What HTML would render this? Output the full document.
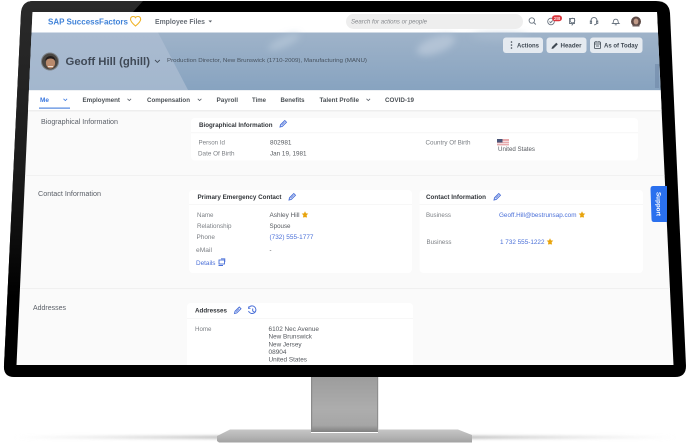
<!DOCTYPE html>
<html><head><meta charset="utf-8"><title>SAP SuccessFactors</title>
<style>
html,body{margin:0;padding:0;background:#fff;width:686px;height:443px;overflow:hidden}
svg{display:block}
text{font-family:"Liberation Sans",sans-serif;font-size:6px;fill:#6a6d70}
.b{font-weight:700}
.k{fill:#7b7f84}
.v{fill:#55595e}
.l{fill:#4a6fd8}
.h{fill:#32363a;font-weight:700}
.n{fill:#4c5156;font-weight:700;font-size:6px}
.s{fill:#5b6068;font-size:7px}
</style></head><body>
<svg width="686" height="443" viewBox="0 0 686 443" xmlns="http://www.w3.org/2000/svg">
<defs>
<linearGradient id="neck" x1="0" x2="0" y1="0" y2="1"><stop offset="0" stop-color="#9c9c9c"/><stop offset=".6" stop-color="#adadad"/><stop offset=".88" stop-color="#a6a6a6"/><stop offset="1" stop-color="#7f7f7f"/></linearGradient>
<linearGradient id="base" x1="0" x2="0" y1="0" y2="1"><stop offset="0" stop-color="#c6c6c6"/><stop offset=".6" stop-color="#b2b2b2"/><stop offset="1" stop-color="#a2a2a2"/></linearGradient>
<linearGradient id="ban" x1="0" x2="0" y1="0" y2="1"><stop offset="0" stop-color="#9fb3c9"/><stop offset="1" stop-color="#87a3c0"/></linearGradient>
<linearGradient id="lf" x1="0" x2="0" y1="0" y2="1"><stop offset="0" stop-color="#aabbd0"/><stop offset="1" stop-color="#a3b7ce"/></linearGradient>
<linearGradient id="bez" x1="0" x2="0" y1="0" y2="1"><stop offset="0" stop-color="#2a2a2a"/><stop offset=".45" stop-color="#1c1c1c"/><stop offset=".8" stop-color="#000"/></linearGradient>
<linearGradient id="shL" x1="0" x2="1" y1="0" y2="0"><stop offset="0" stop-color="#ddd" stop-opacity="0"/><stop offset="1" stop-color="#c4c4c4"/></linearGradient>
<linearGradient id="shR" x1="0" x2="1" y1="0" y2="0"><stop offset="0" stop-color="#c4c4c4"/><stop offset="1" stop-color="#ddd" stop-opacity="0"/></linearGradient>
<filter id="sf" x="-20%" y="-200%" width="140%" height="500%"><feGaussianBlur stdDeviation="1.2"/></filter>
<filter id="cl" x="-50%" y="-100%" width="200%" height="300%"><feGaussianBlur stdDeviation="3.500"/></filter>
<filter id="t" x="-2%" y="-2%" width="104%" height="104%"><feGaussianBlur stdDeviation="0.3"/></filter>
<clipPath id="scr"><polygon points="32.500,12 657,12 673.500,365 16.500,365"/></clipPath>
<symbol id="pen" viewBox="0 0 10 10"><path d="M1.200 8.800l.6-2.600 5-5 2 2-5 5z" fill="none" stroke="#4a6fd8" stroke-width="1.100"/><path d="M3 6.800l3.600-3.600" stroke="#4a6fd8" stroke-width=".7"/></symbol>
<symbol id="star" viewBox="0 0 10 10"><path d="M5 .4l1.450 3 3.250.4-2.400 2.250.65 3.250L5 8.700 2.050 9.300l.65-3.250L.3 3.800l3.250-.4z" fill="#e8a40c"/></symbol>
</defs>

<!-- shadows -->
<rect x="14" y="435.500" width="206" height="3.500" fill="url(#shL)" filter="url(#sf)"/>
<rect x="470" y="435.500" width="206" height="3.500" fill="url(#shR)" filter="url(#sf)"/>

<!-- stand -->
<rect x="311" y="376" width="67" height="56" fill="url(#neck)"/>
<rect x="311" y="376" width="1.200" height="55" fill="#8a8a8a"/>
<rect x="377" y="376" width="1.200" height="55" fill="#8e8e8e"/>
<polygon points="230,429.500 311,429.500 311,433 378,433 378,429.500 458,429.500 472,435 472,442.500 219,442.500 217,441 217,436" fill="url(#base)"/>

<!-- frame -->
<path d="M33 1H656Q669 1 670 13L686 366Q686 377 675 377H14Q3.500 377 4 366L21 13Q22 1 33 1Z" fill="#000"/>
<path d="M33 1H143L133 12H32.500L16.500 365L8 372Q3.500 372 4 366L21 13Q22 1 33 1Z" fill="url(#bez)"/>

<!-- screen -->
<g clip-path="url(#scr)">
<rect x="0" y="12" width="686" height="354" fill="#fafafa"/>
<rect x="0" y="12" width="686" height="20.500" fill="#fff"/>
<rect x="0" y="32.500" width="686" height="57.500" fill="url(#ban)"/>
<polygon points="0,32.500 158,32.500 188,90 0,90" fill="url(#lf)"/>
<g filter="url(#cl)">
<ellipse cx="284" cy="42" rx="17" ry="5" transform="rotate(-25 284 42)" fill="#b7c7d8" opacity=".7"/>
<ellipse cx="436" cy="45" rx="20" ry="8" transform="rotate(-20 436 45)" fill="#b9c8d9" opacity=".8"/>
<ellipse cx="500" cy="36" rx="28" ry="4" fill="#aebfd2" opacity=".5"/>
</g>
<rect x="0" y="90" width="686" height="1" fill="#eef1f4"/>
<rect x="0" y="91" width="686" height="19" fill="#fff"/>
<rect x="0" y="110" width="686" height="1.500" fill="#eeeeee"/>
<rect x="655" y="64" width="4" height="24" fill="#6f89a8" opacity=".6"/>
<rect x="0" y="175" width="686" height=".8" fill="#efefef"/>
<rect x="0" y="288" width="686" height="1" fill="#f0f0f0"/>
<rect x="39" y="107.600" width="31" height="1" fill="#2f6fd8"/>

<!-- cards -->
<rect x="191" y="118" width="447" height="42.500" rx="4" fill="#fff"/>
<rect x="191" y="132" width="447" height="1.300" fill="#f8f8f8"/>
<rect x="189" y="190" width="223" height="83" rx="4" fill="#fff"/>
<rect x="189" y="204" width="223" height="1" fill="#f7f7f7"/>
<rect x="419.500" y="190" width="223.500" height="83" rx="4" fill="#fff"/>
<rect x="419.500" y="204" width="223.500" height="1" fill="#f7f7f7"/>
<rect x="187" y="303" width="226" height="70" rx="4" fill="#fff"/>
<rect x="187" y="318" width="226" height="1" fill="#f7f7f7"/>

<!-- search -->
<rect x="346" y="14" width="177" height="15" rx="7.500" fill="#eeeeee"/>
</g>

<g filter="url(#t)">
<!-- top bar -->
<text x="48" y="24.500" class="b" style="font-size:8px;fill:#3f82d8" textLength="80" lengthAdjust="spacingAndGlyphs">SAP SuccessFactors</text>
<path d="M135.500 26C132 23 130.500 21 130.500 19.200C130.500 17.300 132 16.400 133.400 16.500C134.500 16.500 135.200 17 135.500 17.600C135.900 17 136.600 16.500 137.700 16.500C139.200 16.400 140.700 17.300 140.700 19.200C140.700 21 139.100 23 135.500 26Z" fill="none" stroke="#f0b429" stroke-width="1.100"/>
<text x="155" y="24" class="b" style="font-size:7px;fill:#6a7078" textLength="50" lengthAdjust="spacingAndGlyphs">Employee Files</text>
<path d="M208.500 20.500h3.600l-1.800 2z" fill="#5a6068"/>
<text x="351" y="23.500" style="font-size:6px;font-style:italic;fill:#85888c" textLength="76" lengthAdjust="spacingAndGlyphs">Search for actions or people</text>
<!-- header icons -->
<g fill="none" stroke="#6a7480" stroke-width=".9">
<circle cx="531.800" cy="20.500" r="2.700"/><path d="M533.800 22.500l2 2"/>
<circle cx="551" cy="21.500" r="3.300"/><path d="M549.500 21.500l1.200 1.200 2-2.300"/>
<path d="M569.500 18.500h5v5h-1.300l-1 1.300v-1.300h-2.700z"/><circle cx="572.500" cy="20.500" r="2.300"/>
<path d="M591 22v-1.500a3 3 0 0 1 6 0V22"/><rect x="590.300" y="21" width="1.300" height="2.500"/><rect x="596.500" y="21" width="1.300" height="2.500"/><path d="M596.500 23.800q-1 1.200-2.500 1"/>
<path d="M612.500 23.500q1-.8 1-2.500a2.300 2.300 0 0 1 4.500 0q0 1.700 1 2.500z"/><path d="M614.800 24.800h2"/>
</g>
<rect x="552" y="15.200" width="10" height="6" rx="3" fill="#d9363e"/>
<text x="553.800" y="20" style="font-size:4.500px;fill:#fbd8da" class="b" textLength="6.500" lengthAdjust="spacingAndGlyphs">28</text>
<circle cx="636" cy="21.500" r="5" fill="#5d4a44"/>
<ellipse cx="636" cy="21.500" rx="2.400" ry="3" fill="#c09a88"/>
<path d="M632.500 25q3.500-1.500 7 0v1.500h-7z" fill="#6a5a58"/>

<!-- banner buttons -->
<rect x="503" y="37.500" width="40" height="15.500" rx="3" fill="#e5eaf0"/>
<rect x="546.500" y="37.500" width="40" height="15.500" rx="3" fill="#e5eaf0"/>
<rect x="590" y="37.500" width="52.500" height="15.500" rx="3" fill="#e5eaf0"/>
<g fill="#3f4852"><circle cx="511.500" cy="42" r=".8"/><circle cx="511.500" cy="45" r=".8"/><circle cx="511.500" cy="48" r=".8"/></g>
<path d="M551.500 49l.5-2 4.300-4.300 1.500 1.500-4.300 4.300z" fill="#3f4852"/>
<g fill="none" stroke="#3f4852" stroke-width=".8"><rect x="594.500" y="42" width="6" height="6.500" rx=".6"/><path d="M594.500 44h6M596 41v1.500M599 41v1.500M596 46h3"/></g>
<text x="517" y="47.300" class="b" style="font-size:6px;fill:#3f4852" textLength="22" lengthAdjust="spacingAndGlyphs">Actions</text>
<text x="560.500" y="47.300" class="b" style="font-size:6px;fill:#3f4852" textLength="21" lengthAdjust="spacingAndGlyphs">Header</text>
<text x="604" y="47.300" class="b" style="font-size:6px;fill:#3f4852" textLength="34" lengthAdjust="spacingAndGlyphs">As of Today</text>

<!-- profile -->
<circle cx="50" cy="61.500" r="9" fill="#7b8084"/>
<circle cx="50" cy="61.500" r="8" fill="#4a4541"/>
<ellipse cx="50.500" cy="63" rx="4.600" ry="5.500" fill="#b98a6c"/>
<path d="M45 61q1-5 5.500-5t5 5q-2-2.500-5-2.500t-5.500 2.500z" fill="#241f1c"/>
<path d="M48 66h5v.9h-5z" fill="#efe5dd"/>
<text x="65.500" y="65" class="b" style="font-size:11px;fill:#3f4956" textLength="84.500" lengthAdjust="spacingAndGlyphs">Geoff Hill (ghill)</text>
<path d="M155 60l2.400 2.400 2.400-2.400" fill="none" stroke="#414b58" stroke-width=".9"/>
<text x="167" y="62" style="font-size:5.500px;fill:#47525f" textLength="200" lengthAdjust="spacingAndGlyphs">Production Director, New Brunswick (1710-2009), Manufacturing (MANU)</text>

<!-- nav -->
<text x="40" y="102" class="n" style="fill:#3b78e0" textLength="9" lengthAdjust="spacingAndGlyphs">Me</text>
<text x="82.500" y="102" class="n" textLength="37.500" lengthAdjust="spacingAndGlyphs">Employment</text>
<text x="147" y="102" class="n" textLength="43" lengthAdjust="spacingAndGlyphs">Compensation</text>
<text x="216.500" y="102" class="n" textLength="21.500" lengthAdjust="spacingAndGlyphs">Payroll</text>
<text x="252" y="102" class="n" textLength="14" lengthAdjust="spacingAndGlyphs">Time</text>
<text x="280.500" y="102" class="n" textLength="24" lengthAdjust="spacingAndGlyphs">Benefits</text>
<text x="319.500" y="102" class="n" textLength="39.500" lengthAdjust="spacingAndGlyphs">Talent Profile</text>
<text x="385" y="102" class="n" textLength="29" lengthAdjust="spacingAndGlyphs">COVID-19</text>
<g fill="none" stroke-width=".8">
<path d="M63.500 98.800l1.800 1.800 1.800-1.800" stroke="#3b78e0"/>
<path d="M127.500 98.800l1.800 1.800 1.800-1.800" stroke="#5a6068"/>
<path d="M197.800 98.800l1.800 1.800 1.800-1.800" stroke="#5a6068"/>
<path d="M366.500 98.800l1.800 1.800 1.800-1.800" stroke="#5a6068"/>
</g>

<!-- biographical -->
<text x="41" y="124" class="s" textLength="77" lengthAdjust="spacingAndGlyphs">Biographical Information</text>
<text x="199" y="127" class="h" textLength="73.500" lengthAdjust="spacingAndGlyphs">Biographical Information</text>
<use href="#pen" x="279" y="119.500" width="8.500" height="8.500"/>
<text x="198.500" y="144.500" class="k" textLength="26.500" lengthAdjust="spacingAndGlyphs">Person Id</text>
<text x="270" y="144.500" class="v" textLength="21.500" lengthAdjust="spacingAndGlyphs">802981</text>
<text x="198" y="155.500" class="k" textLength="36.500" lengthAdjust="spacingAndGlyphs">Date Of Birth</text>
<text x="270" y="155.500" class="v" textLength="36.500" lengthAdjust="spacingAndGlyphs">Jan 19, 1981</text>
<text x="425.500" y="144.500" class="k" textLength="45" lengthAdjust="spacingAndGlyphs">Country Of Birth</text>
<rect x="497" y="139" width="12" height="7" fill="#e8a9ac"/>
<rect x="497" y="141" width="12" height=".9" fill="#f4e3e3"/><rect x="497" y="143" width="12" height=".9" fill="#f4e3e3"/><rect x="497" y="145" width="12" height=".9" fill="#f4e3e3"/>
<rect x="497" y="139" width="5.500" height="3.500" fill="#4b5578"/>
<text x="498" y="151" class="v" textLength="37" lengthAdjust="spacingAndGlyphs">United States</text>

<!-- contact -->
<text x="38" y="196" class="s" textLength="63" lengthAdjust="spacingAndGlyphs">Contact Information</text>
<text x="197.500" y="199" class="h" textLength="84" lengthAdjust="spacingAndGlyphs">Primary Emergency Contact</text>
<use href="#pen" x="288" y="192.500" width="8.500" height="8.500"/>
<text x="197" y="216.800" class="k" textLength="16.500" lengthAdjust="spacingAndGlyphs">Name</text>
<text x="269.500" y="216.800" class="v" textLength="30" lengthAdjust="spacingAndGlyphs">Ashley Hill</text>
<use href="#star" x="301.500" y="211" width="7" height="7"/>
<text x="197" y="228" class="k" textLength="34.500" lengthAdjust="spacingAndGlyphs">Relationship</text>
<text x="269.500" y="228" class="v" textLength="21" lengthAdjust="spacingAndGlyphs">Spouse</text>
<text x="196.500" y="239" class="k" textLength="18.500" lengthAdjust="spacingAndGlyphs">Phone</text>
<text x="269.500" y="239" class="l" textLength="44" lengthAdjust="spacingAndGlyphs">(732) 555-1777</text>
<text x="196" y="252" class="k" textLength="16" lengthAdjust="spacingAndGlyphs">eMail</text>
<text x="269.500" y="252" class="v">-</text>
<text x="196" y="264.800" class="l" textLength="19.500" lengthAdjust="spacingAndGlyphs">Details</text>
<g fill="none" stroke="#4a6fd8" stroke-width=".9"><rect x="219" y="260" width="5.500" height="4"/><path d="M221 258.800h3.800v3.200M218.500 265.500h4.500"/></g>

<text x="426" y="199" class="h" textLength="60" lengthAdjust="spacingAndGlyphs">Contact Information</text>
<use href="#pen" x="493" y="192.500" width="8.500" height="8.500"/>
<text x="426" y="216.800" class="k" textLength="25" lengthAdjust="spacingAndGlyphs">Business</text>
<text x="499" y="216.800" class="l" textLength="77.500" lengthAdjust="spacingAndGlyphs">Geoff.Hill@bestrunsap.com</text>
<use href="#star" x="578.500" y="211" width="7" height="7"/>
<text x="426.500" y="243.800" class="k" textLength="25" lengthAdjust="spacingAndGlyphs">Business</text>
<text x="500" y="243.800" class="l" textLength="44.500" lengthAdjust="spacingAndGlyphs">1 732 555-1222</text>
<use href="#star" x="546.500" y="238" width="7" height="7"/>

<!-- support -->
<path d="M667 186H653Q650.500 186 650.500 189L651.500 219Q651.500 222 654 222H667Z" fill="#2b70ee"/>
<text transform="translate(656.500,192) rotate(90)" class="b" style="font-size:6px;fill:#fff" textLength="24" lengthAdjust="spacingAndGlyphs">Support</text>

<!-- addresses -->
<text x="33" y="310" class="s" textLength="33" lengthAdjust="spacingAndGlyphs">Addresses</text>
<text x="195" y="312.500" class="h" textLength="32" lengthAdjust="spacingAndGlyphs">Addresses</text>
<use href="#pen" x="233.500" y="306" width="8.500" height="8.500"/>
<g fill="none" stroke="#4a6fd8" stroke-width="1"><path d="M249 307.500a3.800 3.800 0 1 1-.5 3.500"/><path d="M252.700 308.500v2.500l1.700 1"/><path d="M248.500 306.500v2h2" stroke-width=".8"/></g>
<text x="195" y="331" class="k" textLength="16.500" lengthAdjust="spacingAndGlyphs">Home</text>
<text x="268.500" y="331" class="v" textLength="50.500" lengthAdjust="spacingAndGlyphs">6102 Nec Avenue</text>
<text x="268.500" y="338.700" class="v" textLength="43.500" lengthAdjust="spacingAndGlyphs">New Brunswick</text>
<text x="268.500" y="346.300" class="v" textLength="33" lengthAdjust="spacingAndGlyphs">New Jersey</text>
<text x="268.500" y="354" class="v" textLength="18" lengthAdjust="spacingAndGlyphs">08904</text>
<text x="268.500" y="361.500" class="v" textLength="38.500" lengthAdjust="spacingAndGlyphs">United States</text>
</g>
</svg>
</body></html>
